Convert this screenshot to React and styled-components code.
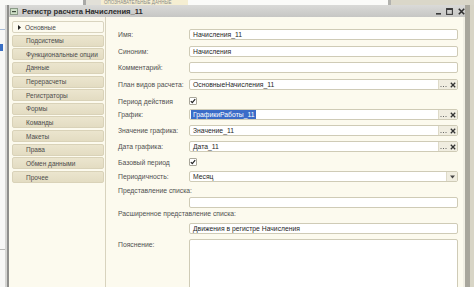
import React from 'react';
import styled, { createGlobalStyle } from 'styled-components';

const Global = createGlobalStyle`
  html, body { margin: 0; padding: 0; }
  body {
    width: 474px; height: 287px; overflow: hidden;
    background: #f4f4f2;
    font-family: "Liberation Sans", Arial, sans-serif;
  }
  * { box-sizing: border-box; }
`;

const Screen = styled.div`
  width: 474px; height: 287px;
  display: flex; flex-direction: column; overflow: hidden;
`;

const TopStrip = styled.div`
  height: 5px; flex-shrink: 0; display: flex; overflow: hidden;
`;

const StripSeg = styled.div`
  width: ${p => p.$w}px;
  flex: ${p => (p.$grow ? 1 : 'none')};
  background: ${p => p.$bg};
  display: flex; align-items: flex-end; overflow: hidden;
  font-size: 4.5px; color: #8a8a86; line-height: 5px; padding-left: 3px;
  white-space: nowrap;
`;

const Main = styled.div`
  flex: 1; display: flex; min-height: 0;
`;

const LeftBg = styled.div`
  width: 7px; flex-shrink: 0;
  background: #f7f7f6;
  border-right: 2px solid #d4d4d2;
  display: flex; flex-direction: column;
`;

const BgLine = styled.div`
  height: 1px; margin-top: ${p => p.$mt}px; background: ${p => p.$c};
`;

const BgSquare = styled.div`
  width: 3px; height: 7px; margin-top: ${p => p.$mt}px; background: #3a6fc4;
`;

const Window = styled.div`
  flex: 1; display: flex; flex-direction: column; min-width: 0;
  border-left: 2px solid #8e8e8c;
  border-right: 5px solid #a8a69c;
`;

const TitleBar = styled.div`
  height: 12px; flex-shrink: 0;
  display: flex; align-items: center;
  background: linear-gradient(#dadad8, #c6c6c4);
  padding: 0 0 0 1px;
`;

const TitleText = styled.div`
  margin-left: 4px;
  font-size: 7.6px; font-weight: bold; color: #2e2e2e;
  white-space: nowrap;
`;

const Controls = styled.div`
  margin-left: auto; display: flex; align-items: center; gap: 5px;
`;

const Body = styled.div`
  flex: 1; display: flex; min-height: 0;
  background: #fcfaee;
  border-right: 2px solid #f1efe4;
`;

const TabPanel = styled.div`
  width: 97px; flex-shrink: 0;
  border-right: 1px solid #d8d3be;
  padding: 4px 1px 0 3px;
  display: flex; flex-direction: column; gap: 1.65px;
`;

const Tab = styled.div`
  height: 12px; flex-shrink: 0;
  display: flex; align-items: center; gap: 4px;
  padding-left: ${p => (p.$active ? 5 : 13)}px;
  border: 1px solid ${p => (p.$active ? '#d9d4bf' : '#d9d2b8')};
  border-radius: 2px;
  background: ${p => (p.$active ? '#fcfaef' : 'linear-gradient(#ebe5ce, #e3dcc2)')};
  font-size: 6.5px; color: #4c4c4c; white-space: nowrap; overflow: hidden;
`;

const FormPanel = styled.div`
  flex: 1; min-width: 0;
  padding: 12px 5px 0 12px;
  display: flex; flex-direction: column;
`;

const Row = styled.div`
  display: grid;
  grid-template-columns: 71px 1fr;
  align-items: ${p => (p.$top ? 'start' : 'center')};
  margin-top: ${p => p.$mt || 0}px;
`;

const Label = styled.div`
  font-size: 6.8px; color: #505050; white-space: nowrap;
  padding-top: ${p => p.$pt || 0}px;
`;

const WideLabel = styled.div`
  font-size: 6.8px; color: #505050; white-space: nowrap;
  height: 9px; line-height: 9px;
  margin-top: ${p => p.$mt || 0}px;
`;

const Field = styled.div`
  grid-column: ${p => (p.$wide ? 2 : 'auto')};
  height: ${p => p.$h || 11}px;
  border: 1px solid #cfcbb6;
  border-radius: 2px;
  background: #fff;
  display: flex; align-items: ${p => (p.$h ? 'flex-start' : 'center')};
  overflow: hidden;
`;

const FieldText = styled.span`
  padding-left: 3px;
  font-size: 6.8px; color: #1f1f1f; white-space: nowrap;
`;

const Selected = styled.span`
  margin-left: 1px;
  padding: 0 2px;
  background: #3b6cc8; color: #fff;
  font-size: 6.8px; white-space: nowrap; line-height: 9px;
`;

const BtnBox = styled.div`
  margin-left: auto; height: 100%;
  display: flex; align-items: center;
  background: #f0ede0;
  border-left: 1px solid #dedac8;
`;

const SmallBtn = styled.div`
  width: ${p => p.$w}px; height: 100%;
  display: flex; align-items: center; justify-content: center;
`;

const Check = styled.div`
  width: 8px; height: 8px;
  border: 1px solid #a9a69a; border-radius: 1px;
  background: #fff;
  display: flex; align-items: center; justify-content: center;
`;

const CheckMark = () => (
  <svg width="6" height="6" viewBox="0 0 6 6">
    <path d="M0.8 3.1 L2.3 4.6 L5.2 1.2" fill="none" stroke="#222" strokeWidth="1.2" />
  </svg>
);

const Dots = () => (
  <svg width="7" height="7" viewBox="0 0 7 7">
    <rect x="0.5" y="5" width="1" height="1" fill="#666" />
    <rect x="3" y="5" width="1" height="1" fill="#666" />
    <rect x="5.5" y="5" width="1" height="1" fill="#666" />
  </svg>
);

const Cross = () => (
  <svg width="6" height="6" viewBox="0 0 6 6">
    <path d="M0.8 0.8 L5.2 5.2 M5.2 0.8 L0.8 5.2" stroke="#333" strokeWidth="1.3" />
  </svg>
);

const ChoiceButtons = () => (
  <BtnBox>
    <SmallBtn $w={9}><Dots /></SmallBtn>
    <SmallBtn $w={9}><Cross /></SmallBtn>
  </BtnBox>
);

const DropButton = () => (
  <BtnBox>
    <SmallBtn $w={10}>
      <svg width="5" height="4" viewBox="0 0 5 4">
        <path d="M0 0.5 H5 L2.5 3.5 Z" fill="#444" />
      </svg>
    </SmallBtn>
  </BtnBox>
);

const WinIcon = () => (
  <svg width="8" height="7" viewBox="0 0 8 7">
    <rect x="0.5" y="0.5" width="7" height="6" fill="#cfe0c8" stroke="#8a9a86" />
    <rect x="2" y="3" width="4" height="1.2" fill="#3d4a3a" />
  </svg>
);

const MinIcon = () => (
  <svg width="5" height="7" viewBox="0 0 5 7">
    <rect x="0" y="5" width="5" height="1.6" fill="#3a3a3a" />
  </svg>
);

const MaxIcon = () => (
  <svg width="7" height="7" viewBox="0 0 7 7">
    <rect x="0.6" y="0.6" width="5.8" height="5.8" fill="none" stroke="#3a3a3a" strokeWidth="1.1" />
    <rect x="0.6" y="0.6" width="5.8" height="1.4" fill="#3a3a3a" />
  </svg>
);

const CloseIcon = () => (
  <svg width="7" height="7" viewBox="0 0 7 7">
    <path d="M0.8 0.8 L6.2 6.2 M6.2 0.8 L0.8 6.2" stroke="#2e2e2e" strokeWidth="1.6" />
  </svg>
);

const tabs = [
  'Основные', 'Подсистемы', 'Функциональные опции', 'Данные', 'Перерасчеты',
  'Регистраторы', 'Формы', 'Команды', 'Макеты', 'Права', 'Обмен данными', 'Прочее',
];

export default function App() {
  return (
    <Screen>
      <Global />
      <TopStrip>
        <StripSeg $w={83} $bg="#f8f8f6" />
        <StripSeg $w={2} $bg="#a9a9a7" />
        <StripSeg $w={15} $bg="#e2e0d8" />
        <StripSeg $w={87} $bg="#f5eed2">ОПОЗНАВАТЕЛЬНЫЕ ДАННЫЕ</StripSeg>
        <StripSeg $w={200} $bg="#fbfbf9" />
        <StripSeg $w={2} $bg="#b2b2ae" />
        <StripSeg $grow $bg="#dad7c9" />
      </TopStrip>
      <Main>
        <LeftBg>
          <BgLine $mt={24} $c="#a8bcd8" />
          <BgSquare $mt={14} />
          <BgLine $mt={198} $c="#b8b8b6" />
        </LeftBg>
        <Window>
          <TitleBar>
            <WinIcon />
            <TitleText>Регистр расчета Начисления_11</TitleText>
            <Controls>
              <MinIcon />
              <MaxIcon />
              <CloseIcon />
            </Controls>
          </TitleBar>
          <Body>
            <TabPanel>
              {tabs.map((t, i) => (
                <Tab key={t} $active={i === 0}>
                  {i === 0 && (
                    <svg width="3" height="5" viewBox="0 0 3 5">
                      <path d="M0 0 L3 2.5 L0 5 Z" fill="#222" />
                    </svg>
                  )}
                  {t}
                </Tab>
              ))}
            </TabPanel>
            <FormPanel>
              <Row>
                <Label>Имя:</Label>
                <Field><FieldText>Начисления_11</FieldText></Field>
              </Row>
              <Row $mt={5.5}>
                <Label>Синоним:</Label>
                <Field><FieldText>Начисления</FieldText></Field>
              </Row>
              <Row $mt={5.5}>
                <Label>Комментарий:</Label>
                <Field />
              </Row>
              <Row $mt={6}>
                <Label>План видов расчета:</Label>
                <Field><FieldText>ОсновныеНачисления_11</FieldText><ChoiceButtons /></Field>
              </Row>
              <Row $mt={7}>
                <Label>Период действия</Label>
                <Check><CheckMark /></Check>
              </Row>
              <Row $mt={4}>
                <Label>График:</Label>
                <Field><Selected>ГрафикиРаботы_11</Selected><ChoiceButtons /></Field>
              </Row>
              <Row $mt={5}>
                <Label>Значение графика:</Label>
                <Field><FieldText>Значение_11</FieldText><ChoiceButtons /></Field>
              </Row>
              <Row $mt={5}>
                <Label>Дата графика:</Label>
                <Field><FieldText>Дата_11</FieldText><ChoiceButtons /></Field>
              </Row>
              <Row $mt={6}>
                <Label>Базовый период</Label>
                <Check><CheckMark /></Check>
              </Row>
              <Row $mt={5}>
                <Label>Периодичность:</Label>
                <Field><FieldText>Месяц</FieldText><DropButton /></Field>
              </Row>
              <WideLabel $mt={3.5}>Представление списка:</WideLabel>
              <Row $mt={2}>
                <Field $wide />
              </Row>
              <WideLabel $mt={1.5}>Расширенное представление списка:</WideLabel>
              <Row $mt={5}>
                <Field $wide><FieldText>Движения в регистре Начисления</FieldText></Field>
              </Row>
              <Row $mt={4.5} $top>
                <Label $pt={2}>Пояснение:</Label>
                <Field $h={56} />
              </Row>
            </FormPanel>
          </Body>
        </Window>
        <StripSeg $w={4} $bg="#d8d5c6" />
      </Main>
    </Screen>
  );
}
